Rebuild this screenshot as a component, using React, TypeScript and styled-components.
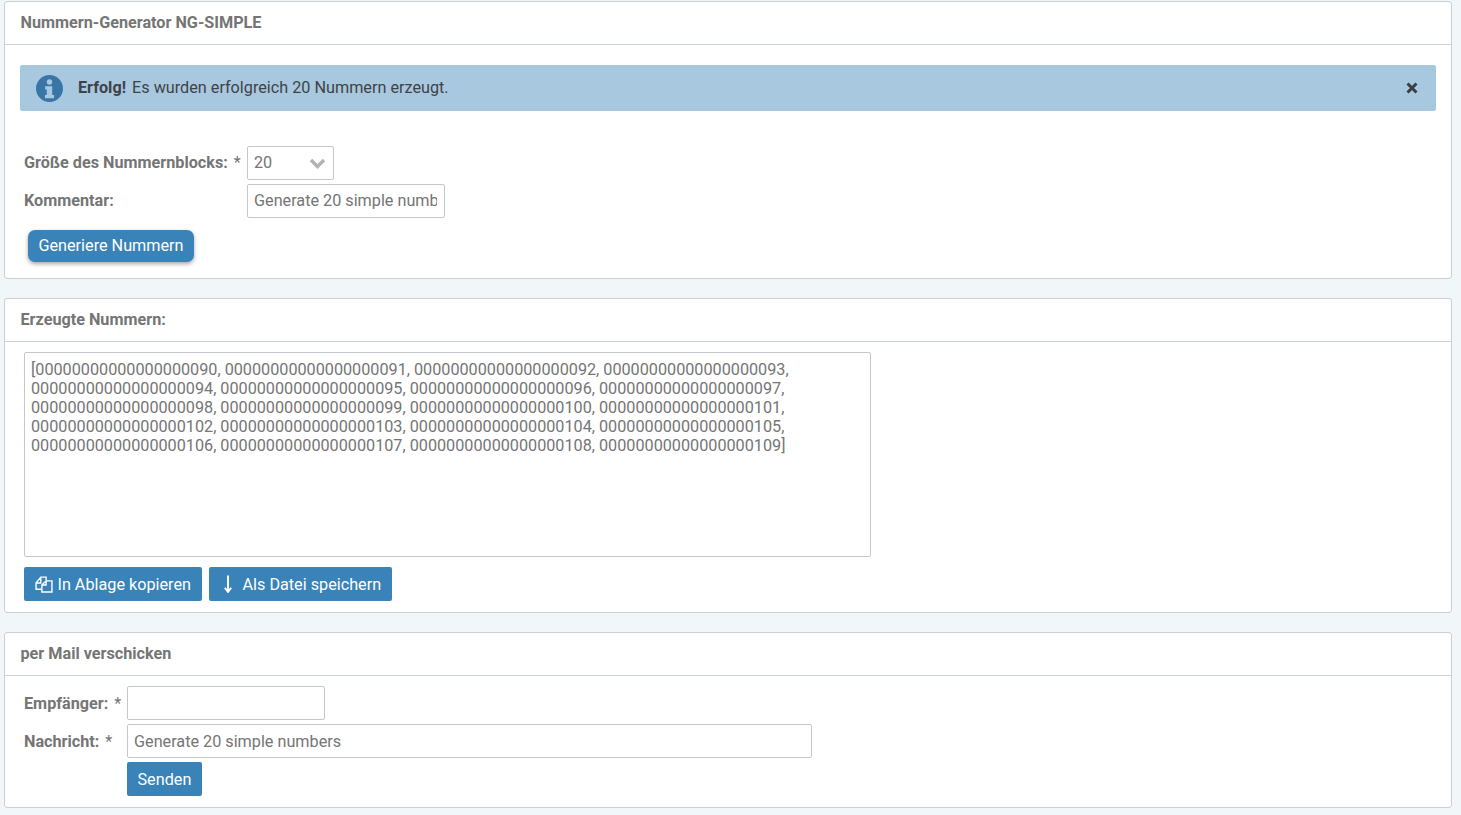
import React from 'react';
import styled, { createGlobalStyle } from 'styled-components';

const GlobalStyle = createGlobalStyle`
  html, body {
    background-color: #f1f6f9;
    margin: 0;
    padding: 0;
    font-family: Roboto, 'Liberation Sans', sans-serif;
    font-size: 16.22px;
    color: #757575;
  }
  * { box-sizing: border-box; }
`;

const Page = styled.div`
  padding: 1px 9px 0 4px;
  display: flex;
  flex-direction: column;
  gap: 19px;
`;

const Panel = styled.section`
  background: #fff;
  border: 1px solid #c9d0d6;
  border-radius: 3px;
`;

const PanelHeader = styled.h3`
  margin: 0;
  height: 43px;
  padding: 0 15.5px 2px;
  display: flex;
  align-items: center;
  border-bottom: 1px solid #c9d0d6;
  font-size: 16.2px;
  font-weight: 700;
  color: #757575;
`;

const PanelBody = styled.div<{ $top: number; $bottom: number }>`
  padding: ${p => p.$top}px 15px ${p => p.$bottom}px 19px;
`;

const Alert = styled.div`
  margin: 0 0 35px -4px;
  height: 46px;
  background: #a8c8e0;
  border-radius: 2px;
  display: flex;
  align-items: center;
  padding: 0 18px 0 16px;
  color: #3f4347;
`;

const AlertIcon = styled.svg`
  width: 27px;
  height: 27px;
  margin-right: 15px;
  flex: none;
`;

const AlertText = styled.span`
  flex: 1;
  padding-bottom: 2px;
  strong {
    margin-right: 2px;
    font-weight: 700;
  }
`;

const CloseIcon = styled.svg`
  width: 12px;
  height: 12px;
`;

const FormGrid = styled.div<{ $label: number }>`
  display: grid;
  grid-template-columns: ${p => p.$label}px 1fr;
  row-gap: 4px;
  align-items: center;
`;

const Label = styled.label<{ $lift?: boolean }>`
  font-weight: 700;
  color: #757575;
  display: flex;
  gap: 6px;
  margin-top: ${p => (p.$lift ? '-1px' : '1px')};
`;

const Star = styled.span`
  font-weight: 400;
`;

const SelectWrap = styled.div`
  position: relative;
  width: 87px;
`;

const Select = styled.select`
  appearance: none;
  width: 100%;
  height: 34px;
  border: 1px solid #c3c8cd;
  border-radius: 2px;
  background: #fff;
  padding: 0 6px 2px;
  font: inherit;
  color: #757575;
`;

const Chevron = styled.svg`
  position: absolute;
  right: 8px;
  top: 12px;
  width: 17px;
  height: 11px;
  pointer-events: none;
`;

const Input = styled.input<{ $width: number; $lift?: boolean }>`
  display: block;
  width: ${p => p.$width}px;
  height: 34px;
  border: 1px solid #c3c8cd;
  border-radius: 2px;
  background: #fff;
  padding: 0 7px ${p => (p.$lift ? '2px' : '0')} 6px;
  font: inherit;
  color: #757575;
`;

const RaisedButton = styled.button`
  display: block;
  margin: 12px 0 0 4px;
  width: 166px;
  height: 32px;
  border: 0;
  border-radius: 7px;
  background: #3a83b9;
  color: #fff;
  font: inherit;
  padding: 0 0 2px;
  box-shadow: 0 2px 4px rgba(0, 0, 0, 0.35);
`;

const Numbers = styled.textarea`
  display: block;
  width: 847px;
  height: 205px;
  border: 1px solid #c3c8cd;
  border-radius: 2px;
  padding: 7px 6px;
  font: inherit;
  line-height: 19px;
  color: #757575;
  resize: none;
  overflow: hidden;
`;

const ButtonRow = styled.div`
  display: flex;
  gap: 7px;
  margin-top: 10px;
`;

const Button = styled.button`
  height: 34px;
  border: 0;
  border-radius: 2px;
  background: #3a83b9;
  color: #fff;
  font: inherit;
  padding: 0 11px 0 10.5px;
  display: inline-flex;
  align-items: center;
  justify-self: start;
  gap: 5px;
`;

const ButtonIcon = styled.svg`
  width: 18px;
  height: 18px;
  flex: none;
`;

const numbers =
  '[00000000000000000090, 00000000000000000091, 00000000000000000092, 00000000000000000093, 00000000000000000094, 00000000000000000095, 00000000000000000096, 00000000000000000097, 00000000000000000098, 00000000000000000099, 00000000000000000100, 00000000000000000101, 00000000000000000102, 00000000000000000103, 00000000000000000104, 00000000000000000105, 00000000000000000106, 00000000000000000107, 00000000000000000108, 00000000000000000109]';

const App: React.FC = () => {
  return (
    <>
      <GlobalStyle />
      <Page>
        <Panel>
          <PanelHeader>Nummern-Generator NG-SIMPLE</PanelHeader>
          <PanelBody $top={20} $bottom={16}>
            <Alert>
              <AlertIcon viewBox="0 0 26 26">
                <circle cx="13" cy="13" r="13" fill="#3a75a8" />
                <circle cx="13" cy="6.8" r="2.6" fill="#a8c8e0" />
                <path d="M8.8 10.8h6.8v8.4h1.8v3.3H8.6v-3.3h1.8v-5.2H8.8z" fill="#a8c8e0" />
              </AlertIcon>
              <AlertText>
                <strong>Erfolg!</strong> Es wurden erfolgreich 20 Nummern erzeugt.
              </AlertText>
              <CloseIcon viewBox="0 0 12 12">
                <path d="M1.5 1.5l9 9M10.5 1.5l-9 9" stroke="#3b3f44" strokeWidth="3" />
              </CloseIcon>
            </Alert>
            <FormGrid $label={223}>
              <Label $lift>
                Größe des Nummernblocks: <Star>*</Star>
              </Label>
              <SelectWrap>
                <Select defaultValue="20">
                  <option>20</option>
                </Select>
                <Chevron viewBox="0 0 17 11">
                  <path d="M2 2l6.5 6.5L15 2" fill="none" stroke="#b3b3b3" strokeWidth="3.4" />
                </Chevron>
              </SelectWrap>
              <Label $lift>Kommentar:</Label>
              <Input $width={198} $lift defaultValue="Generate 20 simple numbers" />
            </FormGrid>
            <RaisedButton>Generiere Nummern</RaisedButton>
          </PanelBody>
        </Panel>

        <Panel>
          <PanelHeader>Erzeugte Nummern:</PanelHeader>
          <PanelBody $top={10} $bottom={11}>
            <Numbers defaultValue={numbers} />
            <ButtonRow>
              <Button>
                <ButtonIcon viewBox="0 0 17 17">
                  <path
                    d="M6 13.5H1V7.5L5.5 2H10.5V5M1 7.5H5.5V3"
                    fill="none"
                    stroke="#fff"
                    strokeWidth="1.3"
                  />
                  <path d="M6.5 9.5L10.5 5.5H16V16H6.5zM6.5 9.5H10.5V6" fill="none" stroke="#fff" strokeWidth="1.3" />
                </ButtonIcon>
                In Ablage kopieren
              </Button>
              <Button>
                <ButtonIcon viewBox="0 0 17 17">
                  <path d="M8.5 0.5v15M5.5 12l3 4 3-4" fill="none" stroke="#fff" strokeWidth="1.8" />
                </ButtonIcon>
                Als Datei speichern
              </Button>
            </ButtonRow>
          </PanelBody>
        </Panel>

        <Panel>
          <PanelHeader>per Mail verschicken</PanelHeader>
          <PanelBody $top={10} $bottom={11}>
            <FormGrid $label={103}>
              <Label>
                Empfänger: <Star>*</Star>
              </Label>
              <Input $width={198} />
              <Label>
                Nachricht: <Star>*</Star>
              </Label>
              <Input $width={685} defaultValue="Generate 20 simple numbers" />
              <span />
              <Button>Senden</Button>
            </FormGrid>
          </PanelBody>
        </Panel>
      </Page>
    </>
  );
};

export default App;
